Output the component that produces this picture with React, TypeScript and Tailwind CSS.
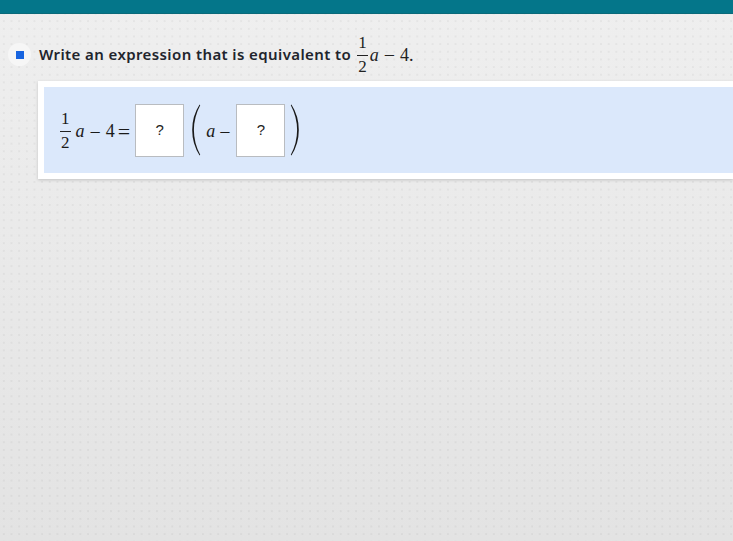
import React from "react";

function Paren({ right = false }: { right?: boolean }) {
  return (
    <svg width="9" height="52" viewBox="0 0 9 52" className={right ? "-scale-x-100" : ""}>
      <path d="M7.6 0.6 Q0.2 12 0.2 26 Q0.2 40 7.6 51.4 L8.2 50.8 Q1.9 39 1.9 26 Q1.9 13 8.2 1.2 Z" fill="#1a1a1a" />
    </svg>
  );
}

function Frac() {
  return (
    <span className="inline-flex flex-col items-center leading-none text-[17px] font-['Liberation_Serif',serif]">
      <span className="block px-[1px] pb-[4px]">1</span>
      <span className="block w-full border-t border-[#222]" />
      <span className="block px-[1px] pt-[2px]">2</span>
    </span>
  );
}

function Box() {
  return (
    <div className="w-[49px] h-[53px] bg-white border border-[#b9bcc0] flex items-center justify-center text-[15px] text-[#222] font-['Liberation_Sans',Arial,sans-serif]">
      ?
    </div>
  );
}

export default function App() {
  return (
    <div className="min-h-screen w-full overflow-hidden bg-[#e8e8e8] [background-image:radial-gradient(circle,rgba(0,0,0,0.045)_1px,transparent_1.4px),linear-gradient(to_bottom,#efefef,#e3e3e3)] [background-size:7.67px_7.67px,100%_100%] [background-position:0px_2px,0_0]">
      <div className="h-[14px] bg-[#04768a] border-b border-[#0b6a7a]" />
      <div className="flex items-center pt-[20px] pl-[8px]">
        <div className="w-[23px] h-[23px] rounded-full bg-[#f6f6f6] flex items-center justify-center">
          <div className="w-[8px] h-[8px] bg-[#1865e0]" />
        </div>
        <span className="ml-[8px] text-[15px] tracking-[0.4px] font-semibold text-[#21242c] font-['Noto_Sans',sans-serif]">
          Write an expression that is equivalent to
        </span>
        <span className="ml-[6px] flex items-center text-[#222] font-['Liberation_Serif',serif]">
          <Frac />
          <span className="ml-[2px] mt-[1px] italic text-[18px]">a</span>
          <span className="ml-[5px] mt-[1px] text-[20px]">−</span>
          <span className="ml-[5px] mt-[1px] text-[18px]">4.</span>
        </span>
      </div>
      <div className="ml-[38px] mt-[6px] bg-white p-[6px] pr-0 shadow-[0_1px_3px_rgba(0,0,0,0.18)]">
        <div className="bg-[#dbe8fb] h-[86px] flex items-center pl-[16px] text-[#1a1a1a] font-['Liberation_Serif',serif]">
          <Frac />
          <span className="ml-[5px] mt-[3px] italic text-[18px]">a</span>
          <span className="ml-[5px] mt-[3px] text-[20px]">−</span>
          <span className="ml-[5px] mt-[3px] text-[18px]">4</span>
          <span className="ml-[3px] mt-[3px] text-[22px]">=</span>
          <div className="ml-[5px]"><Box /></div>
          <div className="ml-[8px] flex items-center"><Paren /></div>
          <span className="ml-[5px] mt-[3px] italic text-[18px]">a</span>
          <span className="ml-[4px] mt-[3px] text-[20px]">−</span>
          <div className="ml-[6px]"><Box /></div>
          <div className="ml-[5px] flex items-center"><Paren right /></div>
        </div>
      </div>
    </div>
  );
}
